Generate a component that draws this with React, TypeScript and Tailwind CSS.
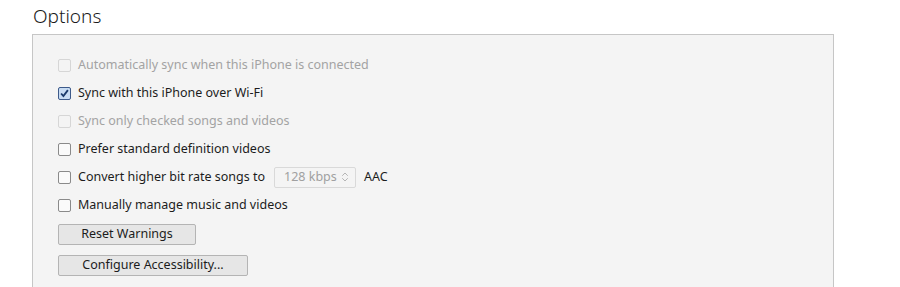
import { ChevronsUpDown } from "lucide-react";

type Opt = { label: string; checked?: boolean; disabled?: boolean };

function Box({ checked, disabled }: { checked?: boolean; disabled?: boolean }) {
  return (
    <span
      className={`flex h-[13px] w-[13px] shrink-0 items-center justify-center rounded-[2px] border ${
        disabled ? "border-[#d6d6d6] bg-[#f4f4f4]" : checked ? "border-[#3d5a8a] bg-[#c8dcf3]" : "border-[#8a8a8a] bg-[#fafafa]"
      }`}
    >
      {checked && (
        <svg viewBox="0 0 13 13" className="h-[13px] w-[13px]">
          <path d="M2.5 6.5 L5.2 9.5 L10.5 2.5" fill="none" stroke="#1b3a6b" strokeWidth="2.2" />
        </svg>
      )}
    </span>
  );
}

function Row({ label, checked, disabled }: Opt) {
  return (
    <div className="flex h-[28px] items-center gap-[7px]">
      <Box checked={checked} disabled={disabled} />
      <span className={disabled ? "text-[#a3a3a3]" : "text-[#1c1c1c]"}>{label}</span>
    </div>
  );
}

export default function App() {
  return (
    <div className="h-[287px] w-[900px] overflow-hidden bg-white font-['Noto_Sans',sans-serif] text-[12.5px]">
      <h1 className="h-[34px] pl-[33px] pt-[3px] text-[19px] font-light leading-[26px] text-[#1a1a1a]">Options</h1>

      {/* Panel */}
      <div className="ml-[32px] w-[802px] border-l border-r border-t border-[#c6c6c6] bg-[#f4f4f4] pb-10 pl-[25px] pt-[16px]">
        <Row label="Automatically sync when this iPhone is connected" disabled />
        <Row label="Sync with this iPhone over Wi-Fi" checked />
        <Row label="Sync only checked songs and videos" disabled />
        <Row label="Prefer standard definition videos" />
        <div className="flex h-[28px] items-center gap-[7px]">
          <Box />
          <span className="text-[#1c1c1c]">Convert higher bit rate songs to</span>
          <div className="ml-[2px] flex h-[21px] w-[82px] items-center justify-between rounded-[2px] border border-[#d9d9d9] bg-[#f4f4f4] pl-[9px] pr-[4px] text-[#a0a0a0]">
            <span>128 kbps</span>
            <ChevronsUpDown className="h-[12px] w-[12px]" strokeWidth={1.5} />
          </div>
          <span className="ml-[1px] text-[#1c1c1c]">AAC</span>
        </div>
        <Row label="Manually manage music and videos" />

        <div className="mt-[5px] flex flex-col items-start gap-[10px]">
          <button className="h-[21px] w-[138px] rounded-[2px] border border-[#b4b4b4] bg-[#e6e6e6] text-[#1c1c1c]">
            Reset Warnings
          </button>
          <button className="h-[21px] w-[190px] rounded-[2px] border border-[#b4b4b4] bg-[#e6e6e6] text-[#1c1c1c]">
            Configure Accessibility...
          </button>
        </div>
      </div>
    </div>
  );
}
